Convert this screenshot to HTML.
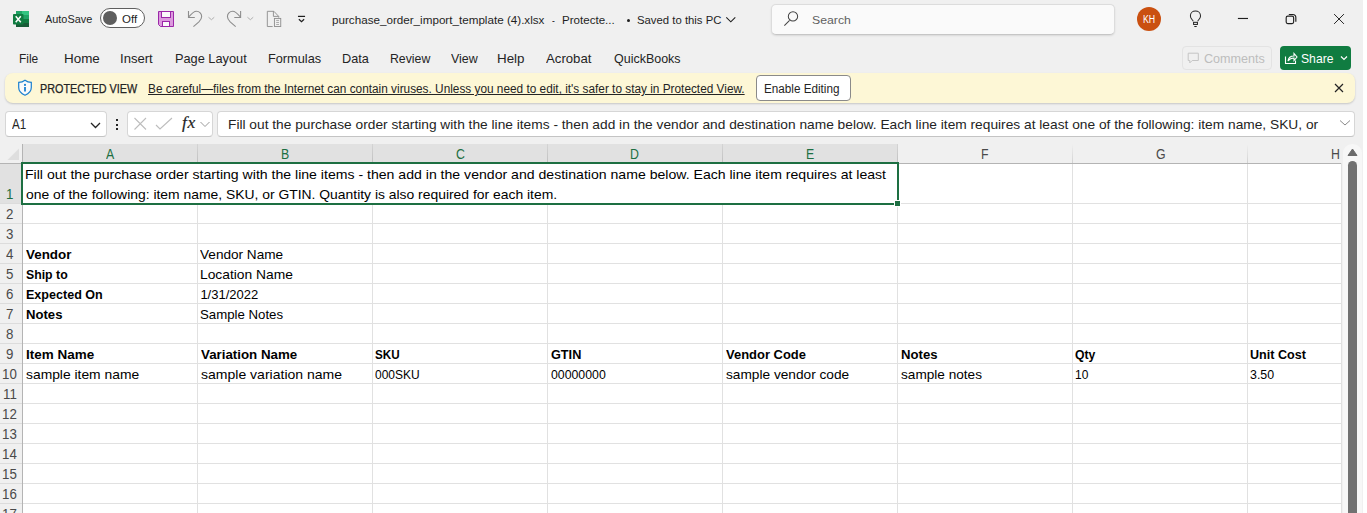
<!DOCTYPE html>
<html><head><meta charset="utf-8">
<style>
html,body{margin:0;padding:0}
body{width:1367px;height:513px;overflow:hidden;position:relative;background:#f0f0f0;font-family:"Liberation Sans",sans-serif}
.t{position:absolute;white-space:pre;line-height:1;transform-origin:0 0}
.a{position:absolute;box-sizing:border-box}
svg{position:absolute;overflow:visible}
</style></head><body>
<!-- ===== TITLE BAR ===== -->
<svg style="left:13px;top:11px" width="16" height="16" viewBox="0 0 16 16">
  <rect x="3" y="0" width="13" height="4" fill="#21a366"/>
  <rect x="9" y="0" width="7" height="4" fill="#33c481"/>
  <rect x="3" y="4" width="13" height="4" fill="#21a366"/>
  <rect x="3" y="8" width="13" height="4" fill="#107c41"/>
  <rect x="3" y="12" width="13" height="4" fill="#185c37"/>
  <rect x="0" y="3" width="10.5" height="10.5" rx="0.8" fill="#107c41"/>
  <path d="M2.7,5.3 L7.8,11.2 M7.8,5.3 L2.7,11.2" stroke="#fff" stroke-width="1.5"/>
</svg>
<div class="a" style="left:100px;top:8px;width:45px;height:20px;border:1px solid #5f5f5f;border-radius:10px;background:#fff"></div>
<div class="a" style="left:103.2px;top:11px;width:13.8px;height:13.8px;border-radius:50%;background:#5f5f5f"></div>
<svg style="left:158px;top:11px" width="16" height="16" viewBox="0 0 16 16">
  <path d="M0.5,0.5 H15.5 V15.5 H2.5 L0.5,13.5 Z" fill="#dc9ade" stroke="#9b27a8" stroke-width="1"/>
  <rect x="3.5" y="0.5" width="9" height="6" fill="#fafafa" stroke="#9b27a8" stroke-width="1"/>
  <rect x="4.5" y="10.5" width="7" height="5" fill="#fafafa" stroke="#9b27a8" stroke-width="1"/>
</svg>
<svg style="left:183px;top:6px" width="75" height="26" viewBox="0 0 1367 474" fill="none">
  <path d="M100,90 V210 H215 M110,195 C170,120 200,95 245,95 C300,95 340,140 340,190 C340,230 320,260 290,290 L190,375" stroke="#8d8d8d" stroke-width="20"/>
  <path d="M465,205 L518,250 L570,205" stroke="#a6a6a6" stroke-width="16"/>
  <path d="M1050,90 V210 H935 M1040,195 C980,120 950,95 905,95 C850,95 810,140 810,190 C810,230 830,260 860,290 L960,375" stroke="#8d8d8d" stroke-width="20"/>
  <path d="M1175,205 L1228,250 L1280,205" stroke="#a6a6a6" stroke-width="16"/>
</svg>
<svg style="left:262px;top:6px" width="50" height="26" viewBox="0 0 987 513" fill="none">
  <path d="M210,405 H105 V105 H235 L330,205 V230 M225,105 V205 H330" stroke="#8d8d8d" stroke-width="18"/>
  <rect x="245" y="245" width="125" height="160" stroke="#8d8d8d" stroke-width="18"/>
  <path d="M280,285 H335 M280,325 H335 M280,365 H335" stroke="#8d8d8d" stroke-width="14"/>
  <path d="M710,205 H850" stroke="#1f1f1f" stroke-width="24"/>
  <path d="M728,262 L780,310 L832,262" stroke="#1f1f1f" stroke-width="24"/>
</svg>
<div class="a" style="left:626.5px;top:19px;width:3.2px;height:3.2px;border-radius:50%;background:#1f1f1f"></div>
<svg style="left:725px;top:16px" width="12" height="8" viewBox="0 0 12 8" fill="none"><path d="M1.3,1.3 L5.8,5.8 L10.3,1.3" stroke="#1f1f1f" stroke-width="1.1"/></svg>
<!-- search -->
<div class="a" style="left:770.5px;top:3.5px;width:344.5px;height:31.3px;border:1px solid #dcdcdc;border-bottom-color:#c6c6c6;border-radius:5px;background:#fafafa;box-shadow:0 1px 2px rgba(0,0,0,0.10)"></div>
<svg style="left:776px;top:6px" width="30" height="26" viewBox="0 0 592 513" fill="none">
  <circle cx="335" cy="205" r="92" stroke="#424242" stroke-width="20"/>
  <path d="M268,285 L165,385" stroke="#424242" stroke-width="20"/>
</svg>
<div class="a" style="left:1137px;top:7px;width:24px;height:24px;border-radius:50%;background:#ca5010"></div>
<svg style="left:1180px;top:6px" width="30" height="26" viewBox="0 0 592 513" fill="none">
  <path d="M262,302 C245,270 205,245 205,195 C205,140 250,100 305,100 C360,100 405,140 405,195 C405,245 365,270 348,302" stroke="#242424" stroke-width="20"/>
  <rect x="268" y="322" width="76" height="42" stroke="#242424" stroke-width="20"/>
  <path d="M282,405 H330" stroke="#242424" stroke-width="20"/>
</svg>
<svg style="left:1230px;top:6px" width="120" height="26" viewBox="0 0 1367 296" fill="none">
  <path d="M90,142 H205" stroke="#1f1f1f" stroke-width="13"/>
  <rect x="640" y="115" width="85" height="85" rx="18" stroke="#1f1f1f" stroke-width="13"/>
  <path d="M670,97 H715 C735,97 750,112 750,132 V180" stroke="#1f1f1f" stroke-width="13"/>
  <path d="M1186,92 L1298,204 M1298,92 L1186,204" stroke="#1f1f1f" stroke-width="11"/>
</svg>
<!-- ===== RIBBON ===== -->
<div class="a" style="left:1182px;top:46px;width:89.5px;height:24px;border:1px solid #e3e3e3;border-radius:4px;background:#f0f0f0"></div>
<svg style="left:1187px;top:52px" width="13" height="13" viewBox="0 0 13 13" fill="none"><path d="M1.2,1.2 H11.3 V8.5 H5.2 L2.8,10.9 V8.5 H1.2 Z" stroke="#c4c4c4" stroke-width="1"/></svg>
<div class="a" style="left:1280px;top:46px;width:71px;height:24px;border-radius:4px;background:#107c41"></div>
<svg style="left:1284px;top:51px" width="14" height="14" viewBox="0 0 14 14" fill="none">
  <path d="M1.5,5.5 V12.5 H11.5 V9.5" stroke="#fff" stroke-width="1.1"/>
  <path d="M4,10 C4.5,6.5 7,5 10,5 V2.5 L13,6 L10,9.5 V7 C7.5,7 5.5,8 4,10 Z" stroke="#fff" stroke-width="1.1"/>
</svg>
<svg style="left:1340px;top:55px" width="8" height="6" viewBox="0 0 8 6" fill="none"><path d="M1,1.5 L4,4.5 L7,1.5" stroke="#fff" stroke-width="1.2"/></svg>
<!-- ===== PROTECTED VIEW ===== -->
<div class="a" style="left:5px;top:73px;width:1350px;height:30px;border-radius:8px;background:#fdf7d6;box-shadow:0 1px 2px rgba(0,0,0,0.18)"></div>
<svg style="left:17px;top:79px" width="16" height="17" viewBox="0 0 16 17" fill="none">
  <path d="M8,1.3 C9.8,2.7 12,3.4 14.3,3.4 V8.6 C14.3,12 12,14.6 8,16.2 C4,14.6 1.7,12 1.7,8.6 V3.4 C4,3.4 6.2,2.7 8,1.3 Z" stroke="#1a7fd0" stroke-width="1.2" fill="#fafafa"/>
  <path d="M8,8.1 V12.6" stroke="#1a7fd0" stroke-width="1.8"/>
  <circle cx="8" cy="5.9" r="1.05" fill="#1a7fd0"/>
</svg>
<div class="a" style="left:756px;top:75px;width:95px;height:25.5px;border:1px solid #8a8a8a;border-radius:4px;background:#fff"></div>
<svg style="left:1334px;top:83px" width="10" height="10" viewBox="0 0 10 10" fill="none"><path d="M1,1 L9,9 M9,1 L1,9" stroke="#242424" stroke-width="1.2"/></svg>
<!-- ===== FORMULA BAR ===== -->
<div class="a" style="left:4.6px;top:111px;width:102px;height:25.5px;border:1px solid #d6d6d6;border-bottom-color:#c4c4c4;border-radius:4px;background:#fff"></div>
<svg style="left:90px;top:122px" width="11" height="7" viewBox="0 0 11 7" fill="none"><path d="M1,1 L5.5,5.5 L10,1" stroke="#242424" stroke-width="1.3"/></svg>
<div class="a" style="left:116px;top:119px;width:2px;height:2px;background:#242424"></div>
<div class="a" style="left:116px;top:123.5px;width:2px;height:2px;background:#242424"></div>
<div class="a" style="left:116px;top:128px;width:2px;height:2px;background:#242424"></div>
<div class="a" style="left:127px;top:111px;width:85.5px;height:25.5px;border:1px solid #d6d6d6;border-bottom-color:#c4c4c4;border-radius:4px;background:#fff"></div>
<svg style="left:134px;top:117px" width="80" height="14" viewBox="0 0 80 14" fill="none">
  <path d="M0.5,1 L12,12.5 M12,1 L0.5,12.5" stroke="#bdbdbd" stroke-width="1.1"/>
  <path d="M22,8 L26,12 L38,1" stroke="#bdbdbd" stroke-width="1.1"/>
  <path d="M66.5,5 L71,9.5 L75.5,5" stroke="#9a9a9a" stroke-width="1"/>
</svg>
<span class="fx" style="position:absolute;white-space:pre;line-height:1;left:182px;top:113.8px;font-family:'Liberation Serif',serif;font-style:italic;font-weight:400;font-size:17.5px;color:#242424;letter-spacing:0.6px;-webkit-text-stroke:0.2px #242424">fx</span>
<div class="a" style="left:217px;top:111px;width:1138px;height:25.5px;border:1px solid #d6d6d6;border-bottom-color:#c4c4c4;border-radius:4px;background:#fff"></div>
<svg style="left:1339px;top:119px" width="12" height="8" viewBox="0 0 12 8" fill="none"><path d="M1,1.5 L6,6 L11,1.5" stroke="#8a8a8a" stroke-width="1"/></svg>
<!-- ===== GRID ===== -->
<div class="a" style="left:22px;top:163px;width:1319px;height:350px;background:#fff"></div>
<div class="a" style="left:22px;top:144px;width:876px;height:19px;background:#e1e1e1"></div>
<div class="a" style="left:0px;top:163px;width:22px;height:40px;background:#e1e1e1"></div>
<svg style="left:0;top:0" width="1367" height="513">
  <path d="M7.5,160 H19 V148.5 Z" fill="#dedede"/>
</svg>
<div class="a" style="left:23px;top:203px;width:1318px;height:1px;background:#e1e1e1"></div>
<div class="a" style="left:0px;top:203px;width:22px;height:1px;background:#dcdcdc"></div>
<div class="a" style="left:23px;top:223px;width:1318px;height:1px;background:#e1e1e1"></div>
<div class="a" style="left:0px;top:223px;width:22px;height:1px;background:#dcdcdc"></div>
<div class="a" style="left:23px;top:243px;width:1318px;height:1px;background:#e1e1e1"></div>
<div class="a" style="left:0px;top:243px;width:22px;height:1px;background:#dcdcdc"></div>
<div class="a" style="left:23px;top:263px;width:1318px;height:1px;background:#e1e1e1"></div>
<div class="a" style="left:0px;top:263px;width:22px;height:1px;background:#dcdcdc"></div>
<div class="a" style="left:23px;top:283px;width:1318px;height:1px;background:#e1e1e1"></div>
<div class="a" style="left:0px;top:283px;width:22px;height:1px;background:#dcdcdc"></div>
<div class="a" style="left:23px;top:303px;width:1318px;height:1px;background:#e1e1e1"></div>
<div class="a" style="left:0px;top:303px;width:22px;height:1px;background:#dcdcdc"></div>
<div class="a" style="left:23px;top:323px;width:1318px;height:1px;background:#e1e1e1"></div>
<div class="a" style="left:0px;top:323px;width:22px;height:1px;background:#dcdcdc"></div>
<div class="a" style="left:23px;top:343px;width:1318px;height:1px;background:#e1e1e1"></div>
<div class="a" style="left:0px;top:343px;width:22px;height:1px;background:#dcdcdc"></div>
<div class="a" style="left:23px;top:363px;width:1318px;height:1px;background:#e1e1e1"></div>
<div class="a" style="left:0px;top:363px;width:22px;height:1px;background:#dcdcdc"></div>
<div class="a" style="left:23px;top:383px;width:1318px;height:1px;background:#e1e1e1"></div>
<div class="a" style="left:0px;top:383px;width:22px;height:1px;background:#dcdcdc"></div>
<div class="a" style="left:23px;top:403px;width:1318px;height:1px;background:#e1e1e1"></div>
<div class="a" style="left:0px;top:403px;width:22px;height:1px;background:#dcdcdc"></div>
<div class="a" style="left:23px;top:423px;width:1318px;height:1px;background:#e1e1e1"></div>
<div class="a" style="left:0px;top:423px;width:22px;height:1px;background:#dcdcdc"></div>
<div class="a" style="left:23px;top:443px;width:1318px;height:1px;background:#e1e1e1"></div>
<div class="a" style="left:0px;top:443px;width:22px;height:1px;background:#dcdcdc"></div>
<div class="a" style="left:23px;top:463px;width:1318px;height:1px;background:#e1e1e1"></div>
<div class="a" style="left:0px;top:463px;width:22px;height:1px;background:#dcdcdc"></div>
<div class="a" style="left:23px;top:483px;width:1318px;height:1px;background:#e1e1e1"></div>
<div class="a" style="left:0px;top:483px;width:22px;height:1px;background:#dcdcdc"></div>
<div class="a" style="left:23px;top:503px;width:1318px;height:1px;background:#e1e1e1"></div>
<div class="a" style="left:0px;top:503px;width:22px;height:1px;background:#dcdcdc"></div>
<div class="a" style="left:197px;top:204px;width:1px;height:309px;background:#e1e1e1"></div>
<div class="a" style="left:197px;top:144px;width:1px;height:19px;background:linear-gradient(#d4d4d4,#c0c0c0)"></div>
<div class="a" style="left:372px;top:204px;width:1px;height:309px;background:#e1e1e1"></div>
<div class="a" style="left:372px;top:144px;width:1px;height:19px;background:linear-gradient(#d4d4d4,#c0c0c0)"></div>
<div class="a" style="left:547px;top:204px;width:1px;height:309px;background:#e1e1e1"></div>
<div class="a" style="left:547px;top:144px;width:1px;height:19px;background:linear-gradient(#d4d4d4,#c0c0c0)"></div>
<div class="a" style="left:722px;top:204px;width:1px;height:309px;background:#e1e1e1"></div>
<div class="a" style="left:722px;top:144px;width:1px;height:19px;background:linear-gradient(#d4d4d4,#c0c0c0)"></div>
<div class="a" style="left:897px;top:164px;width:1px;height:349px;background:#e1e1e1"></div>
<div class="a" style="left:897px;top:144px;width:1px;height:19px;background:linear-gradient(#d4d4d4,#c0c0c0)"></div>
<div class="a" style="left:1072px;top:164px;width:1px;height:349px;background:#e1e1e1"></div>
<div class="a" style="left:1072px;top:144px;width:1px;height:19px;background:linear-gradient(#f0f0f0,#d2d2d2)"></div>
<div class="a" style="left:1247px;top:164px;width:1px;height:349px;background:#e1e1e1"></div>
<div class="a" style="left:1247px;top:144px;width:1px;height:19px;background:linear-gradient(#f0f0f0,#d2d2d2)"></div>
<div class="a" style="left:1341px;top:163px;width:1px;height:350px;background:#e1e1e1"></div>
<div class="a" style="left:0px;top:163px;width:1341px;height:1px;background:#b4b4b4"></div>
<div class="a" style="left:22px;top:144px;width:1px;height:369px;background:#b4b4b4"></div>
<div class="a" style="left:21px;top:162px;width:878px;height:43px;border:2px solid #1d6f42"></div>
<div class="a" style="left:895px;top:201px;width:5px;height:5px;background:#1d6f42;outline:1px solid #fff"></div>
<!-- scrollbar -->
<div class="a" style="left:1343px;top:144px;width:19px;height:369px;border-radius:9px 9px 0 0;background:#f7f7f7"></div>
<svg style="left:1347px;top:148px" width="11" height="9" viewBox="0 0 11 9"><path d="M5.5,1 L10,7.5 H1 Z" fill="#6b6b6b" stroke="#6b6b6b" stroke-width="1" stroke-linejoin="round"/></svg>
<div class="a" style="left:1348px;top:160.5px;width:9px;height:360px;border-radius:4.5px;background:#717171"></div>
<div class="a" style="left:1363px;top:0;width:4px;height:513px;background:#ffffff"></div>
<span class="t" id="t0" style="position:absolute;top:13.92px;font-size:11.5px;font-weight:400;color:#1f1f1f;left:45.20px;transform:scaleX(0.9460);">AutoSave</span>
<span class="t" id="t1" style="position:absolute;top:13.72px;font-size:11.5px;font-weight:400;color:#1f1f1f;left:122.40px;transform:scaleX(1.0042);">Off</span>
<span class="t" id="t2" style="position:absolute;top:15.22px;font-size:11.5px;font-weight:400;color:#1f1f1f;left:331.60px;transform:scaleX(1.0133);">purchase_order_import_template (4).xlsx</span>
<span class="t" id="t3" style="position:absolute;top:15.22px;font-size:11.5px;font-weight:400;color:#1f1f1f;left:552.00px;transform:scaleX(0.7500);">-</span>
<span class="t" id="t4" style="position:absolute;top:15.22px;font-size:11.5px;font-weight:400;color:#1f1f1f;left:562.00px;transform:scaleX(1.0054);">Protecte...</span>
<span class="t" id="t5" style="position:absolute;top:15.22px;font-size:11.5px;font-weight:400;color:#1f1f1f;left:636.50px;transform:scaleX(0.9854);">Saved to this PC</span>
<span class="t" id="t6" style="position:absolute;top:14.83px;font-size:11.5px;font-weight:400;color:#616161;left:811.80px;transform:scaleX(1.0654);">Search</span>
<span class="t" id="t7" style="position:absolute;top:14.50px;font-size:10px;font-weight:400;color:#ffffff;left:1143.00px;transform:scaleX(0.8778);">KH</span>
<span class="t" id="t8" style="position:absolute;top:51.52px;font-size:13.5px;font-weight:400;color:#242424;left:18.52px;transform:scaleX(0.8842);">File</span>
<span class="t" id="t9" style="position:absolute;top:51.52px;font-size:13.5px;font-weight:400;color:#242424;left:64.21px;transform:scaleX(0.9941);">Home</span>
<span class="t" id="t10" style="position:absolute;top:51.52px;font-size:13.5px;font-weight:400;color:#242424;left:120.03px;transform:scaleX(0.9693);">Insert</span>
<span class="t" id="t11" style="position:absolute;top:51.52px;font-size:13.5px;font-weight:400;color:#242424;left:175.05px;transform:scaleX(0.9459);">Page Layout</span>
<span class="t" id="t12" style="position:absolute;top:51.52px;font-size:13.5px;font-weight:400;color:#242424;left:268.06px;transform:scaleX(0.9440);">Formulas</span>
<span class="t" id="t13" style="position:absolute;top:51.52px;font-size:13.5px;font-weight:400;color:#242424;left:342.26px;transform:scaleX(0.9390);">Data</span>
<span class="t" id="t14" style="position:absolute;top:51.52px;font-size:13.5px;font-weight:400;color:#242424;left:390.49px;transform:scaleX(0.9100);">Review</span>
<span class="t" id="t15" style="position:absolute;top:51.52px;font-size:13.5px;font-weight:400;color:#242424;left:451.00px;transform:scaleX(0.9225);">View</span>
<span class="t" id="t16" style="position:absolute;top:51.52px;font-size:13.5px;font-weight:400;color:#242424;left:497.21px;transform:scaleX(0.9902);">Help</span>
<span class="t" id="t17" style="position:absolute;top:51.52px;font-size:13.5px;font-weight:400;color:#242424;left:546.20px;transform:scaleX(0.9770);">Acrobat</span>
<span class="t" id="t18" style="position:absolute;top:51.52px;font-size:13.5px;font-weight:400;color:#242424;left:613.80px;transform:scaleX(0.9242);">QuickBooks</span>
<span class="t" id="t19" style="position:absolute;top:52.67px;font-size:12.5px;font-weight:400;color:#bdbdbd;left:1203.70px;transform:scaleX(1.0070);">Comments</span>
<span class="t" id="t20" style="position:absolute;top:51.82px;font-size:13.5px;font-weight:400;color:#ffffff;left:1301.00px;transform:scaleX(0.9010);">Share</span>
<span class="t" id="t21" style="position:absolute;top:83.17px;font-size:12.5px;font-weight:400;color:#242424;-webkit-text-stroke:0.25px #242424;left:40.14px;transform:scaleX(0.8639);">PROTECTED VIEW</span>
<span class="t" id="t22" style="position:absolute;top:83.17px;font-size:12.5px;font-weight:400;color:#242424;text-decoration:underline;left:147.55px;transform:scaleX(0.9456);">Be careful—files from the Internet can contain viruses. Unless you need to edit, it's safer to stay in Protected View.</span>
<span class="t" id="t23" style="position:absolute;top:83.17px;font-size:12.5px;font-weight:400;color:#242424;left:764.06px;transform:scaleX(0.9364);">Enable Editing</span>
<span class="t" id="t24" style="position:absolute;top:117.10px;font-size:14px;font-weight:400;color:#242424;left:11.80px;transform:scaleX(0.8306);">A1</span>
<span class="t" id="t25" style="position:absolute;top:117.53px;font-size:13.5px;font-weight:400;color:#242424;left:227.98px;transform:scaleX(1.0180);">Fill out the purchase order starting with the line items - then add in the vendor and destination name below. Each line item requires at least one of the following: item name, SKU, or</span>
<span class="t" id="t26" style="position:absolute;top:147.30px;font-size:14px;font-weight:400;color:#1d6f42;left:105.60px;transform:scaleX(0.8800);">A</span>
<span class="t" id="t27" style="position:absolute;top:147.30px;font-size:14px;font-weight:400;color:#1d6f42;left:280.60px;transform:scaleX(0.8800);">B</span>
<span class="t" id="t28" style="position:absolute;top:147.30px;font-size:14px;font-weight:400;color:#1d6f42;left:455.60px;transform:scaleX(0.8800);">C</span>
<span class="t" id="t29" style="position:absolute;top:147.30px;font-size:14px;font-weight:400;color:#1d6f42;left:630.16px;transform:scaleX(0.8800);">D</span>
<span class="t" id="t30" style="position:absolute;top:147.30px;font-size:14px;font-weight:400;color:#1d6f42;left:805.60px;transform:scaleX(0.8800);">E</span>
<span class="t" id="t31" style="position:absolute;top:147.30px;font-size:14px;font-weight:400;color:#4a4a4a;left:981.04px;transform:scaleX(0.8800);">F</span>
<span class="t" id="t32" style="position:absolute;top:147.30px;font-size:14px;font-weight:400;color:#4a4a4a;left:1155.60px;transform:scaleX(0.8800);">G</span>
<span class="t" id="t33" style="position:absolute;top:147.30px;font-size:14px;font-weight:400;color:#4a4a4a;left:1330.60px;transform:scaleX(0.8800);">H</span>
<span class="t" id="t34" style="position:absolute;top:187.10px;font-size:14px;font-weight:400;color:#1d6f42;left:5.73px;transform:scaleX(0.9500);">1</span>
<span class="t" id="t35" style="position:absolute;top:207.10px;font-size:14px;font-weight:400;color:#4a4a4a;left:6.20px;transform:scaleX(0.9500);">2</span>
<span class="t" id="t36" style="position:absolute;top:227.10px;font-size:14px;font-weight:400;color:#4a4a4a;left:6.20px;transform:scaleX(0.9500);">3</span>
<span class="t" id="t37" style="position:absolute;top:247.10px;font-size:14px;font-weight:400;color:#4a4a4a;left:6.20px;transform:scaleX(0.9500);">4</span>
<span class="t" id="t38" style="position:absolute;top:267.10px;font-size:14px;font-weight:400;color:#4a4a4a;left:6.20px;transform:scaleX(0.9500);">5</span>
<span class="t" id="t39" style="position:absolute;top:287.10px;font-size:14px;font-weight:400;color:#4a4a4a;left:6.20px;transform:scaleX(0.9500);">6</span>
<span class="t" id="t40" style="position:absolute;top:307.10px;font-size:14px;font-weight:400;color:#4a4a4a;left:6.20px;transform:scaleX(0.9500);">7</span>
<span class="t" id="t41" style="position:absolute;top:327.10px;font-size:14px;font-weight:400;color:#4a4a4a;left:6.20px;transform:scaleX(0.9500);">8</span>
<span class="t" id="t42" style="position:absolute;top:347.10px;font-size:14px;font-weight:400;color:#4a4a4a;left:6.20px;transform:scaleX(0.9500);">9</span>
<span class="t" id="t43" style="position:absolute;top:367.10px;font-size:14px;font-weight:400;color:#4a4a4a;left:2.03px;transform:scaleX(0.9500);">10</span>
<span class="t" id="t44" style="position:absolute;top:387.10px;font-size:14px;font-weight:400;color:#4a4a4a;left:2.52px;transform:scaleX(0.9500);">11</span>
<span class="t" id="t45" style="position:absolute;top:407.10px;font-size:14px;font-weight:400;color:#4a4a4a;left:2.03px;transform:scaleX(0.9500);">12</span>
<span class="t" id="t46" style="position:absolute;top:427.10px;font-size:14px;font-weight:400;color:#4a4a4a;left:2.03px;transform:scaleX(0.9500);">13</span>
<span class="t" id="t47" style="position:absolute;top:447.10px;font-size:14px;font-weight:400;color:#4a4a4a;left:2.03px;transform:scaleX(0.9500);">14</span>
<span class="t" id="t48" style="position:absolute;top:467.10px;font-size:14px;font-weight:400;color:#4a4a4a;left:2.03px;transform:scaleX(0.9500);">15</span>
<span class="t" id="t49" style="position:absolute;top:487.10px;font-size:14px;font-weight:400;color:#4a4a4a;left:2.03px;transform:scaleX(0.9500);">16</span>
<span class="t" id="t50" style="position:absolute;top:507.10px;font-size:14px;font-weight:400;color:#4a4a4a;left:2.03px;transform:scaleX(0.9500);">17</span>
<span class="t" id="t51" style="position:absolute;top:167.75px;font-size:13px;font-weight:400;color:#000000;left:24.82px;transform:scaleX(1.0832);">Fill out the purchase order starting with the line items - then add in the vendor and destination name below. Each line item requires at least</span>
<span class="t" id="t52" style="position:absolute;top:187.75px;font-size:13px;font-weight:400;color:#000000;left:25.90px;transform:scaleX(1.0683);">one of the following: item name, SKU, or GTIN. Quantity is also required for each item.</span>
<span class="t" id="t53" style="position:absolute;top:247.75px;font-size:13px;font-weight:700;color:#000000;left:25.50px;transform:scaleX(1.0317);">Vendor</span>
<span class="t" id="t54" style="position:absolute;top:247.75px;font-size:13px;font-weight:400;color:#000000;left:200.40px;transform:scaleX(1.0459);">Vendor Name</span>
<span class="t" id="t55" style="position:absolute;top:267.75px;font-size:13px;font-weight:700;color:#000000;left:25.50px;transform:scaleX(0.9455);">Ship to</span>
<span class="t" id="t56" style="position:absolute;top:267.75px;font-size:13px;font-weight:400;color:#000000;left:200.14px;transform:scaleX(1.0625);">Location Name</span>
<span class="t" id="t57" style="position:absolute;top:287.75px;font-size:13px;font-weight:700;color:#000000;left:25.50px;transform:scaleX(0.9657);">Expected On</span>
<span class="t" id="t58" style="position:absolute;top:287.75px;font-size:13px;font-weight:400;color:#000000;left:200.40px;">1/31/2022</span>
<span class="t" id="t59" style="position:absolute;top:307.75px;font-size:13px;font-weight:700;color:#000000;left:25.50px;transform:scaleX(1.0087);">Notes</span>
<span class="t" id="t60" style="position:absolute;top:307.75px;font-size:13px;font-weight:400;color:#000000;left:200.40px;transform:scaleX(1.0177);">Sample Notes</span>
<span class="t" id="t61" style="position:absolute;top:347.75px;font-size:13px;font-weight:700;color:#000000;left:25.60px;transform:scaleX(1.0363);">Item Name</span>
<span class="t" id="t62" style="position:absolute;top:347.75px;font-size:13px;font-weight:700;color:#000000;left:200.50px;transform:scaleX(1.0246);">Variation Name</span>
<span class="t" id="t63" style="position:absolute;top:347.75px;font-size:13px;font-weight:700;color:#000000;left:375.10px;transform:scaleX(0.8980);">SKU</span>
<span class="t" id="t64" style="position:absolute;top:347.75px;font-size:13px;font-weight:700;color:#000000;left:550.50px;transform:scaleX(0.9751);">GTIN</span>
<span class="t" id="t65" style="position:absolute;top:347.75px;font-size:13px;font-weight:700;color:#000000;left:725.60px;transform:scaleX(0.9969);">Vendor Code</span>
<span class="t" id="t66" style="position:absolute;top:347.75px;font-size:13px;font-weight:700;color:#000000;left:900.50px;transform:scaleX(1.0115);">Notes</span>
<span class="t" id="t67" style="position:absolute;top:347.75px;font-size:13px;font-weight:700;color:#000000;left:1075.40px;transform:scaleX(0.9402);">Qty</span>
<span class="t" id="t68" style="position:absolute;top:347.75px;font-size:13px;font-weight:700;color:#000000;left:1250.30px;transform:scaleX(0.9668);">Unit Cost</span>
<span class="t" id="t69" style="position:absolute;top:367.75px;font-size:13px;font-weight:400;color:#000000;left:25.60px;transform:scaleX(1.0653);">sample item name</span>
<span class="t" id="t70" style="position:absolute;top:367.75px;font-size:13px;font-weight:400;color:#000000;left:200.50px;transform:scaleX(1.0785);">sample variation name</span>
<span class="t" id="t71" style="position:absolute;top:367.75px;font-size:13px;font-weight:400;color:#000000;left:375.10px;transform:scaleX(0.9223);">000SKU</span>
<span class="t" id="t72" style="position:absolute;top:367.75px;font-size:13px;font-weight:400;color:#000000;left:550.50px;transform:scaleX(0.9460);">00000000</span>
<span class="t" id="t73" style="position:absolute;top:367.75px;font-size:13px;font-weight:400;color:#000000;left:725.60px;transform:scaleX(1.0519);">sample vendor code</span>
<span class="t" id="t74" style="position:absolute;top:367.75px;font-size:13px;font-weight:400;color:#000000;left:900.50px;transform:scaleX(1.0473);">sample notes</span>
<span class="t" id="t75" style="position:absolute;top:367.75px;font-size:13px;font-weight:400;color:#000000;left:1075.40px;transform:scaleX(0.9206);">10</span>
<span class="t" id="t76" style="position:absolute;top:367.75px;font-size:13px;font-weight:400;color:#000000;left:1250.30px;transform:scaleX(0.9533);">3.50</span>
</body></html>
